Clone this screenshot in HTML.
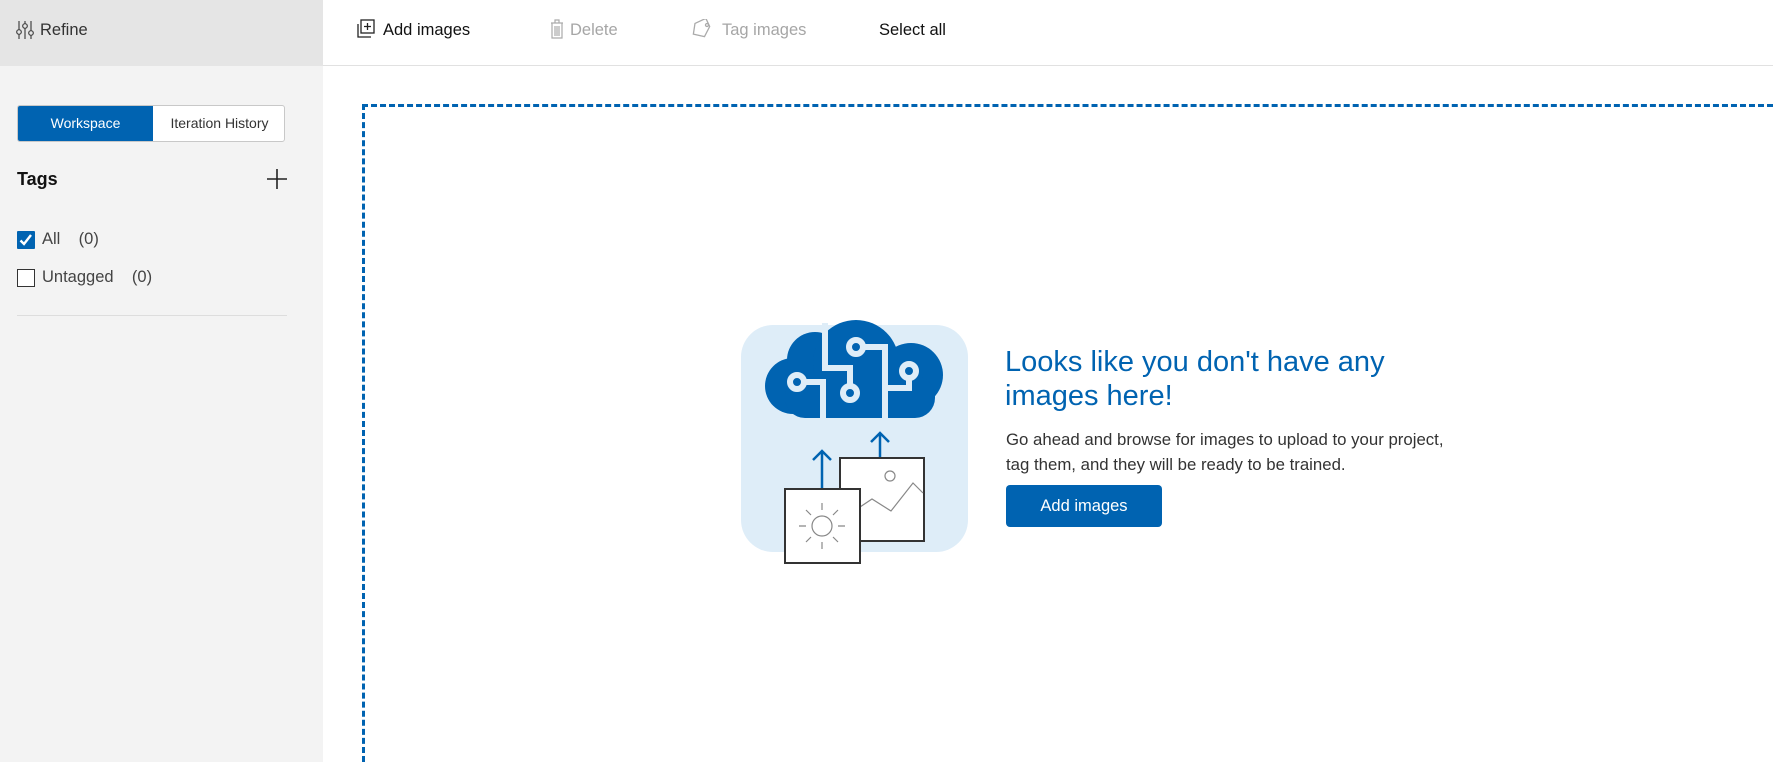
<!DOCTYPE html>
<html><head><meta charset="utf-8"><style>
*{margin:0;padding:0;box-sizing:border-box}
html,body{width:1773px;height:762px;overflow:hidden}
body{background:#fff;font-family:"Liberation Sans",sans-serif;color:#000}
#wrap{position:relative;width:1773px;height:762px;overflow:hidden}
.abs{position:absolute}
#left{left:0;top:0;width:323px;height:762px;background:#f3f3f3}
#lefttop{left:0;top:0;width:323px;height:66px;background:#e5e5e5}
#topline{left:323px;top:65px;width:1450px;height:1px;background:#e1e1e1}
.tb{top:19px;font-size:16.5px;line-height:22px}
#dash{left:362px;top:104px;width:1411px;height:658px;border:3px dashed #0063b1;border-bottom:none;border-right:none}
</style></head><body><div id="wrap">
<div id="left" class="abs"></div>
<div id="lefttop" class="abs"></div>
<div id="topline" class="abs"></div>
<svg class="abs" style="left:15px;top:20px" width="22" height="20" viewBox="0 0 22 20" fill="none" stroke="#444" stroke-width="1.2">
<line x1="4" y1="1" x2="4" y2="19"/><circle cx="4" cy="12" r="2.3" fill="#e5e5e5"/>
<line x1="10" y1="1" x2="10" y2="19"/><circle cx="10" cy="6" r="2.3" fill="#e5e5e5"/>
<line x1="16" y1="1" x2="16" y2="19"/><circle cx="16" cy="13" r="2.3" fill="#e5e5e5"/>
</svg>
<div class="abs tb" style="left:40px;color:#333">Refine</div>
<svg class="abs" style="left:356px;top:19px" width="20" height="20" viewBox="0 0 20 20" fill="none" stroke="#222" stroke-width="1.3">
<rect x="5" y="1" width="13" height="13"/><path d="M2 5v13h13"/><path d="M11.5 4v7M8 7.5h7"/>
</svg>
<div class="abs tb" style="left:383px;color:#111">Add images</div>
<svg class="abs" style="left:549px;top:18px" width="16" height="22" viewBox="0 0 16 22" fill="none" stroke="#aaa" stroke-width="1.2">
<path d="M2 5h12M6 5V2h4v3M3 5v15h10V5M6 8v10M8 8v10M10 8v10"/>
</svg>
<div class="abs tb" style="left:570px;color:#a6a6a6">Delete</div>
<svg class="abs" style="left:690px;top:19px" width="24" height="20" viewBox="0 0 24 20" fill="none" stroke="#aaa" stroke-width="1.3">
<path d="M8 2h12v9l-9 7-9-7z" transform="rotate(-25 12 10)"/><circle cx="17" cy="6" r="1.5"/>
</svg>
<div class="abs tb" style="left:722px;color:#a6a6a6">Tag images</div>
<div class="abs tb" style="left:879px;color:#111">Select all</div>

<div class="abs" style="left:17px;top:105px;width:268px;height:37px;border:1px solid #c8c8c8;border-radius:3px;background:#fff;overflow:hidden">
<div class="abs" style="left:0;top:0;width:135px;height:37px;background:#0063b1;color:#fff;font-size:14px;line-height:35px;text-align:center">Workspace</div>
<div class="abs" style="left:135px;top:0;width:133px;height:37px;color:#333;font-size:14px;line-height:35px;text-align:center">Iteration History</div>
</div>
<div class="abs" style="left:17px;top:169px;font-size:18px;font-weight:bold;color:#111">Tags</div>
<svg class="abs" style="left:266px;top:168px" width="22" height="22" viewBox="0 0 22 22" stroke="#222" stroke-width="1.6"><path d="M11 1v20M1 11h20"/></svg>
<div class="abs" style="left:17px;top:231px;width:18px;height:18px;background:#0063b1;border-radius:1px"></div>
<svg class="abs" style="left:17px;top:231px" width="18" height="18" viewBox="0 0 18 18" fill="none" stroke="#fff" stroke-width="2.4"><path d="M3.5 9.5l3.5 3.5 7-9"/></svg>
<div class="abs" style="left:42px;top:230px;font-size:16.5px;color:#444">All&nbsp;&nbsp;&nbsp;&nbsp;(0)</div>
<div class="abs" style="left:17px;top:269px;width:18px;height:18px;border:1.5px solid #333;background:#fff"></div>
<div class="abs" style="left:42px;top:268px;font-size:16.5px;color:#444">Untagged&nbsp;&nbsp;&nbsp;&nbsp;(0)</div>
<div class="abs" style="left:17px;top:315px;width:270px;height:1px;background:#ddd"></div>

<div id="dash" class="abs"></div>

<svg class="abs" style="left:741px;top:318px" width="230" height="250" viewBox="0 0 230 250">
<rect x="0" y="7" width="227" height="227" rx="32" fill="#deedf8"/>
<g fill="#0063b1">
<circle cx="52" cy="68" r="28"/><circle cx="74" cy="42" r="28"/><circle cx="115" cy="45" r="43"/><circle cx="170" cy="57" r="32"/>
<rect x="44" y="58" width="150" height="42" rx="20"/>
</g>
<g fill="none" stroke="#deedf8" stroke-width="6">
<path d="M84 5v45h25v17"/>
<path d="M64 64h18v42"/>
<path d="M123 29h21v77"/>
<path d="M168 61v9h-24"/>
<circle cx="109" cy="75" r="7"/><circle cx="56" cy="64" r="7"/><circle cx="115" cy="29" r="7"/><circle cx="168" cy="53" r="7"/>
</g>
<g fill="none" stroke="#0063b1" stroke-width="2.5">
<path d="M81 172V133M72 142l9-9 9 9"/>
<path d="M139 142V115M130 124l9-9 9 9"/>
</g>
<rect x="99" y="140" width="84" height="83" fill="#fff" stroke="#333" stroke-width="2"/>
<circle cx="149" cy="158" r="5" fill="none" stroke="#888" stroke-width="1.2"/>
<polyline points="119,189 131,181 150,193 172,165 182,175" fill="none" stroke="#888" stroke-width="1.2"/>
<rect x="44" y="171" width="75" height="74" fill="#fff" stroke="#333" stroke-width="2"/>
<g stroke="#888" stroke-width="1.2" fill="none">
<circle cx="81" cy="208" r="10"/>
<path d="M81 192v-7M81 224v7M65 208h-7M97 208h7M70 197l-5-5M92 197l5-5M70 219l-5 5M92 219l5 5"/>
</g>
</svg>

<div class="abs" style="left:1005px;top:345px;font-size:29px;line-height:34px;color:#0063b1">Looks like you don't have any<br>images here!</div>
<div class="abs" style="left:1006px;top:427px;font-size:16.8px;line-height:25px;color:#333">Go ahead and browse for images to upload to your project,<br>tag them, and they will be ready to be trained.</div>
<div class="abs" style="left:1006px;top:485px;width:156px;height:42px;background:#0063b1;border-radius:4px;color:#fff;font-size:16.5px;line-height:42px;text-align:center">Add images</div>
</div></body></html>
